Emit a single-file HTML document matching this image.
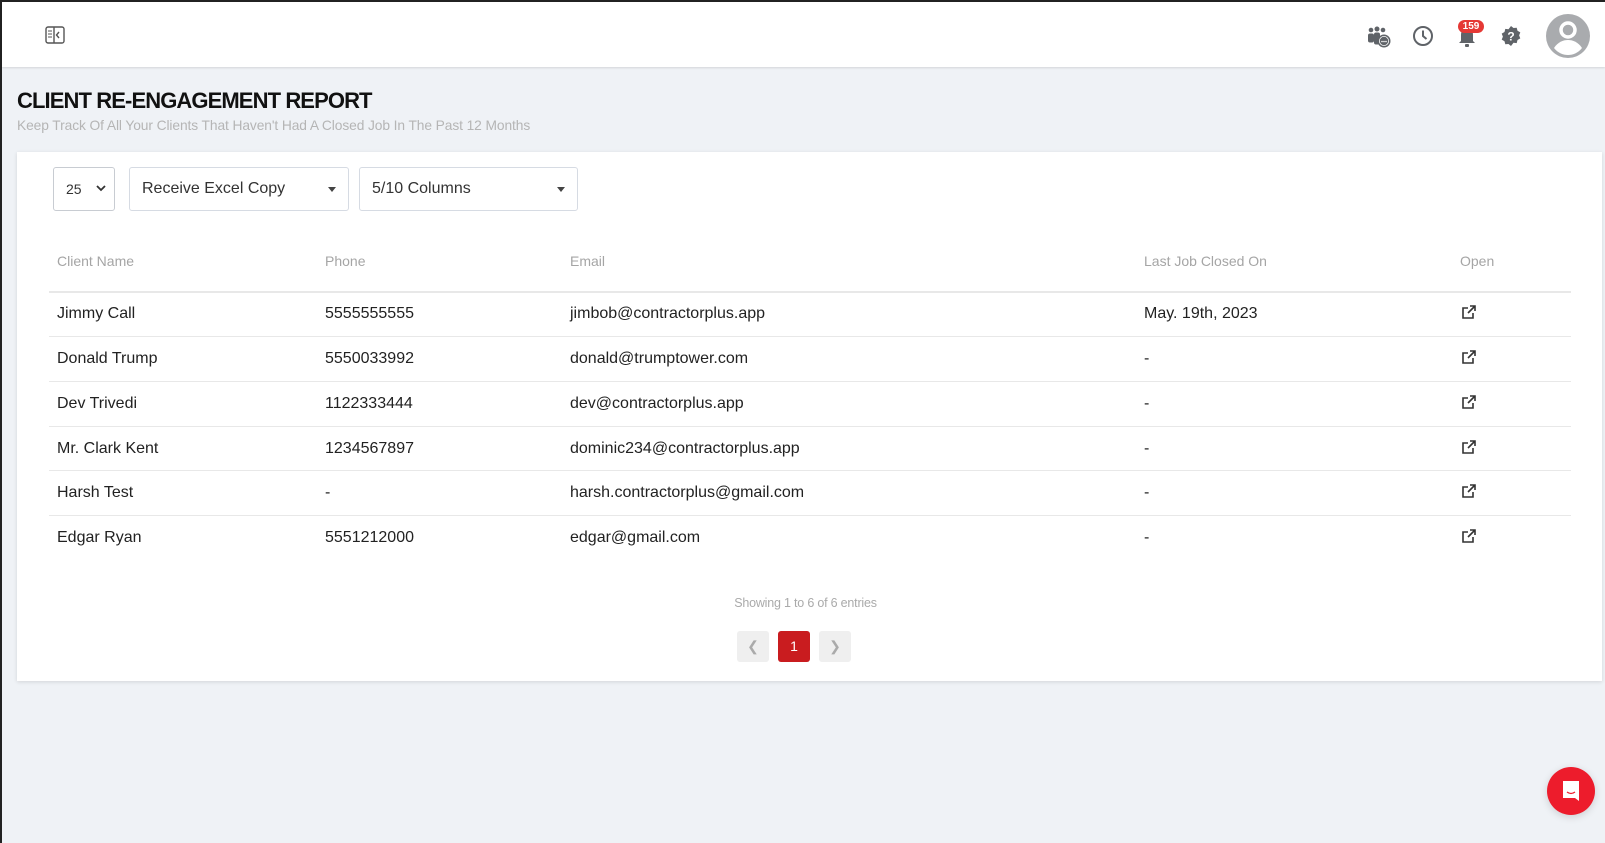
<!DOCTYPE html>
<html><head><meta charset="utf-8"><style>
*{box-sizing:border-box;margin:0;padding:0}
body{width:1605px;height:843px;overflow:hidden;background:#eff2f6;font-family:"Liberation Sans",sans-serif;position:relative;border-top:2px solid #222;border-left:2px solid #222}
.hdr{position:absolute;left:0;top:0;width:1603px;height:65px;background:#fff;box-shadow:0 1px 2px rgba(0,0,0,.12)}
.abs{position:absolute}
h1{position:absolute;left:15px;top:86px;font-size:22px;font-weight:bold;color:#111;letter-spacing:-0.9px}
.sub{position:absolute;left:15px;top:116px;font-size:13.8px;color:#b5b5b5;letter-spacing:-0.1px}
.card{position:absolute;left:15px;top:150px;width:1585px;height:529px;background:#fff;box-shadow:0 1px 4px rgba(0,0,0,.12)}
.sel{position:absolute;top:15px;height:44px;border:1px solid #d6dbe3;border-radius:3px;font-size:16px;color:#333;padding:12px 12px}
.th{position:absolute;top:101px;font-size:14px;color:#a5a5a5}
.line{position:absolute;left:32px;width:1522px;height:2px;background:#e8e8e8}
.td{position:absolute;font-size:16px;color:#222}
.pg{position:absolute;top:479px;width:32px;height:31px;border-radius:3px;background:#efefef;color:#aaa;text-align:center;line-height:31px;font-size:14px}
</style></head><body>
<div class="hdr">
<svg class="abs" style="left:43px;top:24px" width="20" height="18" viewBox="0 0 20 18"><rect x="1" y="1" width="18" height="16" rx="2" fill="none" stroke="#555" stroke-width="1.4"/><line x1="9" y1="1" x2="9" y2="17" stroke="#555" stroke-width="1.4"/><path d="M3 5h4M3 8h4M3 11h4" stroke="#555" stroke-width="1"/><path d="M14 6l-2.5 3 2.5 3" fill="none" stroke="#555" stroke-width="1.4"/></svg>
<svg class="abs" style="left:1365px;top:24px" width="24" height="22" viewBox="0 0 24 22"><g fill="#5f6368"><circle cx="4" cy="4" r="2.3"/><circle cx="10" cy="3" r="2.5"/><circle cx="16" cy="4" r="2.3"/><rect x="1" y="7.5" width="6" height="9" rx="2"/><rect x="7" y="6.5" width="6" height="12" rx="2"/><circle cx="17" cy="15" r="6.5"/></g><circle cx="17" cy="15" r="5" fill="#fff"/><circle cx="17" cy="15" r="4.2" fill="#5f6368"/><g fill="#fff"><circle cx="15" cy="15.5" r=".8"/><circle cx="17" cy="15.5" r=".8"/><circle cx="19" cy="15.5" r=".8"/></g></svg>
<svg class="abs" style="left:1410px;top:23px" width="22" height="22" viewBox="0 0 22 22"><circle cx="11" cy="11" r="9" fill="none" stroke="#5f6368" stroke-width="2"/><path d="M11 5.5V11l3.5 3" fill="none" stroke="#5f6368" stroke-width="2"/></svg>
<svg class="abs" style="left:1455px;top:24px" width="20" height="22" viewBox="0 0 20 22"><path d="M10 2c-4 0-6 3-6 7v6l-2 2h16l-2-2V9c0-4-2-7-6-7z" fill="#5f6368"/><rect x="8" y="18" width="4" height="3" rx="1" fill="#5f6368"/></svg>
<div class="abs" style="left:1456px;top:18px;width:26px;height:13px;background:#e53935;border-radius:7px;color:#fff;font-size:10px;font-weight:bold;text-align:center;line-height:13px">159</div>
<svg class="abs" style="left:1498px;top:23px" width="22" height="22" viewBox="0 0 22 22"><path d="M11 1l2.5 2 3.2-.3.8 3.1 2.8 1.6-1.2 3 1.2 3-2.8 1.6-.8 3.1-3.2-.3L11 21l-2.5-2-3.2.3-.8-3.1-2.8-1.6 1.2-3-1.2-3 2.8-1.6.8-3.1 3.2.3z" fill="#5f6368"/><text x="11" y="15.5" font-size="12" font-weight="bold" fill="#fff" text-anchor="middle" font-family="Liberation Sans">?</text></svg>
<svg class="abs" style="left:1544px;top:12px" width="44" height="44" viewBox="0 0 44 44"><circle cx="22" cy="22" r="22" fill="#a9abae"/><circle cx="22" cy="16" r="7" fill="none" stroke="#fff" stroke-width="3.5"/><path d="M8 34c4-6 9-8 14-8s10 2 14 8c-4 5-9 7-14 7s-10-2-14-7z" fill="#fff"/></svg>
</div>
<h1>CLIENT RE-ENGAGEMENT REPORT</h1>
<div class="sub">Keep Track Of All Your Clients That Haven't Had A Closed Job In The Past 12 Months</div>
<div class="card">
<div class="sel" style="left:36px;width:62px;font-size:14px;padding-top:13px;border-color:#c8ccd2">25<svg style="position:absolute;right:8px;top:17px" width="10" height="7" viewBox="0 0 10 7"><path d="M1 1l4 4 4-4" fill="none" stroke="#333" stroke-width="1.8"/></svg></div>
<div class="sel" style="left:112px;width:220px">Receive Excel Copy<span style="position:absolute;right:12px;top:19px;border:4px solid transparent;border-top:5px solid #444"></span></div>
<div class="sel" style="left:342px;width:219px">5/10 Columns<span style="position:absolute;right:12px;top:19px;border:4px solid transparent;border-top:5px solid #444"></span></div>
<div class="th" style="left:40px">Client Name</div>
<div class="th" style="left:308px">Phone</div>
<div class="th" style="left:553px">Email</div>
<div class="th" style="left:1127px">Last Job Closed On</div>
<div class="th" style="left:1443px">Open</div>
<div class="line" style="top:139px"></div>
<div class="line" style="top:184px;height:1px"></div>
<div class="line" style="top:229px;height:1px"></div>
<div class="line" style="top:274px;height:1px"></div>
<div class="line" style="top:318px;height:1px"></div>
<div class="line" style="top:363px;height:1px"></div>
<div class="td" style="left:40px;top:153px">Jimmy Call</div><div class="td" style="left:308px;top:153px">5555555555</div><div class="td" style="left:553px;top:153px">jimbob@contractorplus.app</div><div class="td" style="left:1127px;top:153px">May. 19th, 2023</div>
<div class="td" style="left:40px;top:198px">Donald Trump</div><div class="td" style="left:308px;top:198px">5550033992</div><div class="td" style="left:553px;top:198px">donald@trumptower.com</div><div class="td" style="left:1127px;top:198px">-</div>
<div class="td" style="left:40px;top:243px">Dev Trivedi</div><div class="td" style="left:308px;top:243px">1122333444</div><div class="td" style="left:553px;top:243px">dev@contractorplus.app</div><div class="td" style="left:1127px;top:243px">-</div>
<div class="td" style="left:40px;top:288px">Mr. Clark Kent</div><div class="td" style="left:308px;top:288px">1234567897</div><div class="td" style="left:553px;top:288px">dominic234@contractorplus.app</div><div class="td" style="left:1127px;top:288px">-</div>
<div class="td" style="left:40px;top:332px">Harsh Test</div><div class="td" style="left:308px;top:332px">-</div><div class="td" style="left:553px;top:332px">harsh.contractorplus@gmail.com</div><div class="td" style="left:1127px;top:332px">-</div>
<div class="td" style="left:40px;top:377px">Edgar Ryan</div><div class="td" style="left:308px;top:377px">5551212000</div><div class="td" style="left:553px;top:377px">edgar@gmail.com</div><div class="td" style="left:1127px;top:377px">-</div>
<svg class="abs" style="left:1444px;top:152px" width="16" height="16" viewBox="0 0 16 16"><path d="M12 9v5H2V4h5M9 2h5v5M14 2L7 9" fill="none" stroke="#333" stroke-width="1.6"/></svg>
<svg class="abs" style="left:1444px;top:197px" width="16" height="16" viewBox="0 0 16 16"><path d="M12 9v5H2V4h5M9 2h5v5M14 2L7 9" fill="none" stroke="#333" stroke-width="1.6"/></svg>
<svg class="abs" style="left:1444px;top:242px" width="16" height="16" viewBox="0 0 16 16"><path d="M12 9v5H2V4h5M9 2h5v5M14 2L7 9" fill="none" stroke="#333" stroke-width="1.6"/></svg>
<svg class="abs" style="left:1444px;top:287px" width="16" height="16" viewBox="0 0 16 16"><path d="M12 9v5H2V4h5M9 2h5v5M14 2L7 9" fill="none" stroke="#333" stroke-width="1.6"/></svg>
<svg class="abs" style="left:1444px;top:331px" width="16" height="16" viewBox="0 0 16 16"><path d="M12 9v5H2V4h5M9 2h5v5M14 2L7 9" fill="none" stroke="#333" stroke-width="1.6"/></svg>
<svg class="abs" style="left:1444px;top:376px" width="16" height="16" viewBox="0 0 16 16"><path d="M12 9v5H2V4h5M9 2h5v5M14 2L7 9" fill="none" stroke="#333" stroke-width="1.6"/></svg>
<div class="abs" style="left:-4px;width:1585px;top:444px;text-align:center;font-size:12.5px;color:#aaa;letter-spacing:-0.2px">Showing 1 to 6 of 6 entries</div>
<div class="pg" style="left:720px">&#10094;</div>
<div class="pg" style="left:761px;background:#c91c1f;color:#fff">1</div>
<div class="pg" style="left:802px">&#10095;</div>
</div>
<div class="abs" style="left:1545px;top:765px;width:48px;height:48px;border-radius:50%;background:#ed1c2c;box-shadow:0 2px 8px rgba(0,0,0,.15)">
<svg style="position:absolute;left:14px;top:13px" width="20" height="22" viewBox="0 0 20 22"><path d="M2 1h16v20l-4-3H2z" fill="#fff"/><path d="M6 12q4 3 8 0" fill="none" stroke="#ed1c2c" stroke-width="1.3"/></svg>
</div>
</body></html>
